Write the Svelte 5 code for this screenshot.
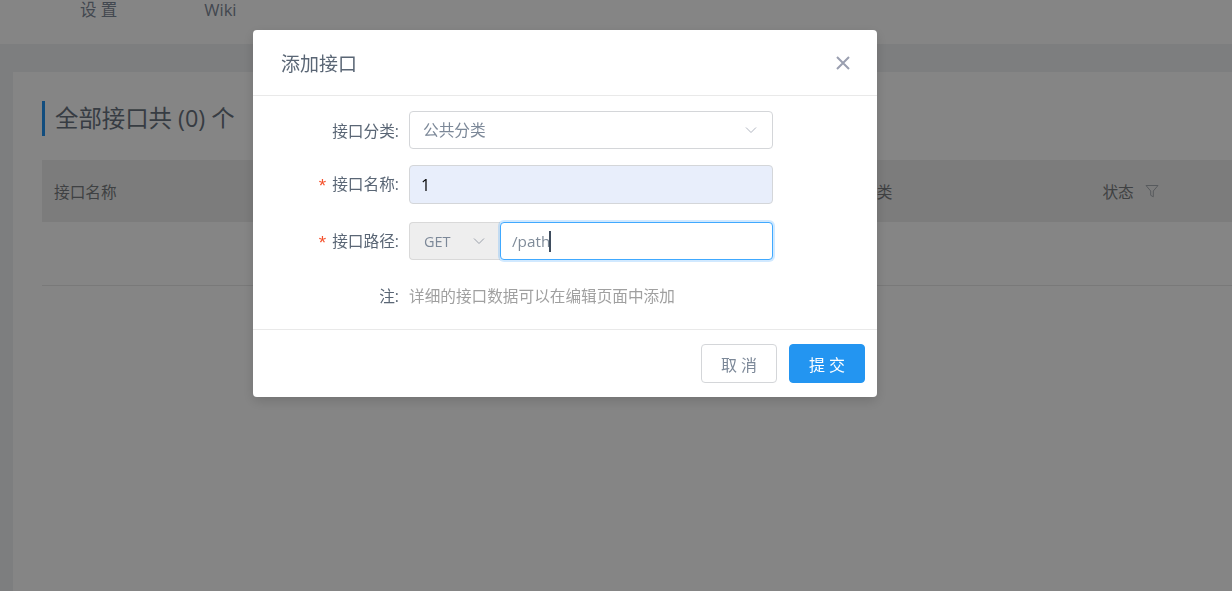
<script>
  const rows = [
    { label: '接口分类:', kind: 'select' },
    { label: '接口名称:', kind: 'name', required: true },
    { label: '接口路径:', kind: 'path', required: true }
  ];
</script>

<div class="page">
  <nav class="nav">
    <span class="nav-item first">设 置</span>
    <span class="nav-item">Wiki</span>
  </nav>
  <main class="main">
    <section class="card">
      <h2 class="heading">全部接口共 (0) 个</h2>
      <div class="thead">
        <span>接口名称</span>
        <span class="th-cat">类</span>
        <span class="th-status">状态
          <svg class="funnel" width="14" height="14" viewBox="0 0 14 14" fill="none" stroke="currentColor" stroke-width="1">
            <path d="M1 1.5h12L8.3 7v5.8L5.7 11.3V7z" />
          </svg>
        </span>
      </div>
      <div class="tbody"></div>
    </section>
  </main>
</div>

<div class="overlay"></div>

<div class="dialog">
  <header class="dlg-head">
    <span class="dlg-title">添加接口</span>
    <svg class="close" width="14" height="14" viewBox="0 0 14 14" stroke="currentColor" stroke-width="2" fill="none">
      <path d="M1 1l12 12M13 1L1 13" />
    </svg>
  </header>
  <div class="dlg-body">
    {#each rows as r}
      <div class="row {r.kind}">
        <span class="label">{#if r.required}<i class="req">*</i>{/if}{r.label}</span>
        {#if r.kind === 'select'}
          <div class="control sel">
            <span>公共分类</span>
            <svg class="chev" width="12" height="8" viewBox="0 0 12 8" fill="none" stroke="currentColor" stroke-width="1">
              <path d="M1 1.5l5 5 5-5" />
            </svg>
          </div>
        {:else if r.kind === 'name'}
          <div class="control filled">1</div>
        {:else}
          <div class="pathgroup">
            <div class="method">
              <span>GET</span>
              <svg class="chev" width="12" height="8" viewBox="0 0 12 8" fill="none" stroke="currentColor" stroke-width="1">
                <path d="M1 1.5l5 5 5-5" />
              </svg>
            </div>
            <div class="pathinput"><span>/path</span><b class="caret"></b></div>
          </div>
        {/if}
      </div>
    {/each}
    <div class="row note">
      <span class="label">注:</span>
      <span class="hint">详细的接口数据可以在编辑页面中添加</span>
    </div>
  </div>
  <footer class="dlg-foot">
    <button class="btn">取 消</button>
    <button class="btn primary">提 交</button>
  </footer>
</div>

<style>
  :global(body) {
    margin: 0;
    overflow: hidden;
    font-family: "Open Sans", "Noto Sans CJK SC", sans-serif;
  }
  .page {
    width: 1232px;
    height: 591px;
    background: #f0f1f3;
    overflow: hidden;
  }
  .nav {
    height: 44px;
    background: #fff;
    display: flex;
    gap: 87px;
    padding-left: 80px;
    font-size: 16.5px;
    line-height: 20px;
  }
  .nav-item { color: #7f8a99; }
  .main { padding: 28px 0 0 13px; }
  .card {
    background: #fff;
    height: 519px;
    padding: 29px 0 0 29px;
  }
  .heading {
    margin: 0 0 24px;
    height: 35px;
    line-height: 35px;
    border-left: 3px solid #2395f1;
    padding-left: 10px;
    font-size: 23.4px;
    font-weight: 400;
    color: #6a7480;
  }
  .thead {
    height: 62px;
    background: #eeeeee;
    display: flex;
    align-items: center;
    padding-left: 12px;
    font-size: 15.7px;
    color: #7a7d80;
  }
  .th-cat { margin-left: 760px; }
  .th-status { margin-left: 210px; display: flex; align-items: center; gap: 11px; }
  .funnel { color: #a8adb3; }
  .tbody { height: 63px; border-bottom: 1px solid #e8e8e8; }
  .overlay {
    position: fixed;
    inset: 0;
    background: rgba(0, 0, 0, 0.48);
  }
  .dialog {
    position: fixed;
    left: 253px;
    top: 30px;
    width: 624px;
    height: 367px;
    background: #fff;
    border-radius: 4px;
    box-shadow: 0 4px 12px rgba(0, 0, 0, 0.15);
    display: flex;
    flex-direction: column;
    color: #5c6b7c;
  }
  .dlg-head {
    height: 66px;
    box-sizing: border-box;
    border-bottom: 1px solid #e9e9e9;
    display: flex;
    align-items: center;
    justify-content: space-between;
    padding: 0 27px 0 28px;
  }
  .dlg-title { font-size: 19px; color: #5a6675; }
  .close { color: #9a9fb0; }
  .dlg-body { flex: 1; padding-top: 15px; }
  .row { display: flex; align-items: center; margin-bottom: 16px; }
  .row.name { margin-bottom: 18px; }
  .row.note { margin: 25px 0 0; height: 20px; }
  .label {
    width: 146px;
    text-align: right;
    margin-right: 10px;
    font-size: 15.7px;
    color: #5a6675;
    white-space: nowrap;
  }
  .req {
    font-style: normal;
    color: #f5522d;
    margin-right: 4px;
    font-size: 19px;
    line-height: 1;
    font-family: "Liberation Mono", monospace;
    vertical-align: -2px;
  }
  .control {
    width: 364px;
    height: 38px;
    box-sizing: border-box;
    border: 1px solid #d4d6d9;
    border-radius: 4px;
    display: flex;
    align-items: center;
    padding: 0 13px;
    font-size: 15.7px;
  }
  .sel { justify-content: space-between; color: #7c8898; padding-right: 15px; }
  .sel span { margin-top: -2px; }
  .filled { background: #e8eefb; color: #000; height: 39px; font-size: 16px; padding: 0 11px; }
  .chev { color: #b0b5c0; }
  .pathgroup { display: flex; width: 364px; height: 38px; }
  .method {
    width: 91px;
    box-sizing: border-box;
    background: #eeeeee;
    border: 1px solid #d9d9d9;
    border-right: 0;
    border-radius: 4px 0 0 4px;
    display: flex;
    align-items: center;
    justify-content: space-between;
    padding: 0 15px 0 14px;
    font-size: 14.5px;
    color: #7c8898;
  }
  .method .chev { color: #9aa0aa; }
  .pathinput {
    flex: 1;
    box-sizing: border-box;
    border: 1px solid #40a9ff;
    border-radius: 4px;
    box-shadow: 0 0 0 2px rgba(24, 144, 255, 0.2);
    display: flex;
    align-items: center;
    padding-left: 11px;
    font-size: 15.3px;
    color: #7f8b99;
    background: #fff;
  }
  .caret {
    display: block;
    width: 2px;
    height: 21px;
    margin-left: -1px;
    background: #3f4d5e;
  }
  .hint { font-size: 15.65px; color: #a0a0a0; }
  .dlg-foot {
    height: 68px;
    box-sizing: border-box;
    border-top: 1px solid #e9e9e9;
    display: flex;
    justify-content: flex-end;
    gap: 12px;
    padding: 14px 12px 0 0;
  }
  .btn {
    width: 76px;
    height: 39px;
    box-sizing: border-box;
    border: 1px solid #d4d6d9;
    border-radius: 4px;
    background: #fff;
    color: #7c8898;
    font: inherit;
    font-size: 16px;
    padding: 0;
  }
  .btn.primary { background: #2395f1; border-color: #2395f1; color: #fff; }
</style>
